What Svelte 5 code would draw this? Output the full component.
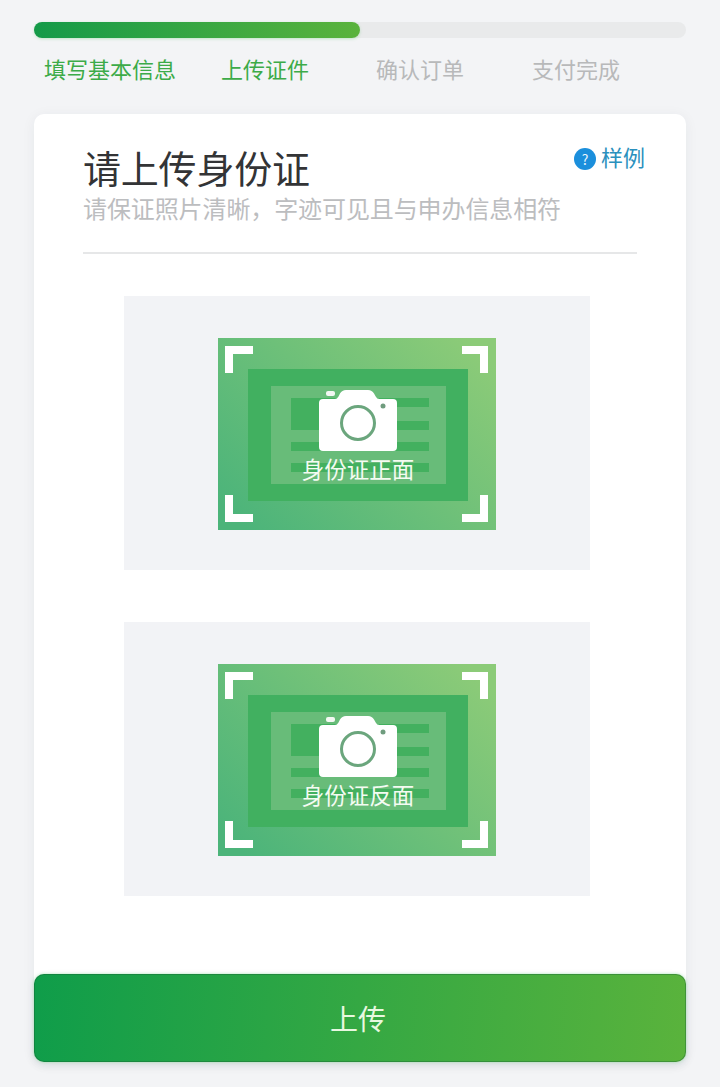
<script lang="ts">
  const steps = [
    { label: '填写基本信息', done: true },
    { label: '上传证件', done: true },
    { label: '确认订单', done: false },
    { label: '支付完成', done: false }
  ];

  const sides = [
    { id: 'front', label: '身份证正面' },
    { id: 'back', label: '身份证反面' }
  ];

  // Corner brackets of the scan frame
  const corners = [
    'M11 35V12H35',
    'M244 12H266V35',
    'M11 157V180H35',
    'M244 180H266V157'
  ];
</script>

<main class="page">
  <div class="progress"><div class="progress-fill"></div></div>

  <ol class="steps">
    {#each steps as step}
      <li class:done={step.done}>{step.label}</li>
    {/each}
  </ol>

  <section class="card">
    <div class="content">
      <header class="head">
        <div>
          <h1>请上传身份证</h1>
          <p>请保证照片清晰，字迹可见且与申办信息相符</p>
        </div>
        <a class="sample" href="#sample">
          <span class="help">?</span>
          样例
        </a>
      </header>

      <div class="uploads">
        {#each sides as side}
          <div class="upload">
            <svg class="id-art" viewBox="0 0 278 192" width="278" height="192" role="img" aria-label={side.label}>
              <defs>
                <linearGradient id={`bg-${side.id}`} x1="0" y1="0.85" x2="1" y2="0.15">
                  <stop offset="0" stop-color="#4cb47a" />
                  <stop offset="1" stop-color="#8ccb78" />
                </linearGradient>
              </defs>
              <rect width="278" height="192" fill={`url(#bg-${side.id})`} />
              <rect x="30" y="31" width="220" height="132" fill="#41b060" />
              <rect x="53" y="48" width="175" height="98" fill="#68bc79" />
              <g fill="#43b05f">
                <rect x="73" y="60" width="138" height="9" />
                <rect x="73" y="69" width="30" height="23" />
                <rect x="73" y="83" width="138" height="9" />
                <rect x="73" y="104" width="138" height="9" />
                <rect x="73" y="125" width="138" height="9" />
              </g>
              {#each corners as d}
                <path {d} fill="none" stroke="#fff" stroke-width="8" />
              {/each}
              <rect x="108" y="53" width="9" height="5" rx="2" fill="#f3f8f3" />
              <path
                d="M105 61H117Q119 61 120.500 58.500L122 55.500Q124 52 128 52H150Q154 52 156 55.500L158 59Q159 61 161.500 61H175Q179 61 179 65V109Q179 113 175 113H105Q101 113 101 109V65Q101 61 105 61Z"
                fill="#fff"
              />
              <circle cx="140" cy="85" r="16.500" fill="#fff" stroke="#6ba67d" stroke-width="3" />
              <circle cx="165" cy="68" r="2.500" fill="#6f9c7e" />
              <text x="140" y="139.500" text-anchor="middle">{side.label}</text>
            </svg>
          </div>
        {/each}
      </div>
    </div>

    <button class="submit" type="button">上传</button>
  </section>
</main>

<style>
  :global(body) {
    background: #f3f4f6;
  }

  .page {
    box-sizing: border-box;
    height: 1087px;
    padding: 22px 34px 0;
    font-family: 'Noto Sans CJK SC', 'Noto Sans', sans-serif;
    overflow: hidden;
  }

  .progress {
    height: 16px;
    border-radius: 8px;
    background: #e9eaeb;
  }

  .progress-fill {
    width: 326px;
    height: 100%;
    border-radius: 8px;
    background: linear-gradient(90deg, #149a48, #5ab33c);
    box-shadow: 0 1px 3px rgba(100, 200, 110, 0.35);
  }

  .steps {
    display: grid;
    grid-template-columns: 177px 155px 156px auto;
    margin: 0;
    padding: 14px 0 0 10px;
    list-style: none;
    font-size: 22px;
    line-height: 32px;
    color: #b8b9ba;
  }

  .steps li.done {
    color: #3cab48;
  }

  .card {
    display: flex;
    flex-direction: column;
    margin-top: 30px;
    height: 948px;
    border-radius: 10px;
    background: #fff;
    box-shadow: 0 2px 14px rgba(40, 50, 70, 0.06);
  }

  .content {
    flex: 1;
    padding: 28px 49px 0;
  }

  .head {
    display: flex;
    justify-content: space-between;
    align-items: flex-start;
    height: 110px;
    border-bottom: 2px solid #e6e7e8;
  }

  h1 {
    margin: 0;
    font-size: 38px;
    font-weight: 400;
    letter-spacing: -0.2px;
    line-height: 50px;
    color: #333436;
  }

  .head p {
    margin: 0;
    font-size: 24px;
    letter-spacing: -0.1px;
    line-height: 32px;
    color: #bcbdbf;
  }

  .sample {
    display: flex;
    align-items: center;
    gap: 5px;
    margin: -2px -8px 0 0;
    font-size: 22px;
    line-height: 32px;
    color: #2b90bd;
    text-decoration: none;
  }

  .help {
    display: grid;
    place-items: center;
    width: 22px;
    height: 22px;
    margin-top: 6px;
    border-radius: 50%;
    background: #1b8fdc;
    color: #e8f4fc;
    font-size: 14px;
    font-weight: 400;
    line-height: 1;
  }

  .uploads {
    display: flex;
    flex-direction: column;
    gap: 52px;
    padding: 42px 0 0 41px;
  }

  .upload {
    box-sizing: border-box;
    display: flex;
    align-items: center;
    justify-content: center;
    width: 466px;
    height: 274px;
    padding-top: 2px;
    background: #f2f3f6;
  }

  .id-art {
    display: block;
  }

  .id-art text {
    fill: #f4fbf2;
    font-size: 22.500px;
  }

  .submit {
    flex: none;
    height: 88px;
    padding: 0 4px 0 0;
    border: 0;
    border-radius: 10px;
    background: linear-gradient(95deg, #0f9d4a, #5ab33c);
    box-shadow:
      inset 0 0 0 1px rgba(20, 90, 50, 0.35),
      0 0 3px rgba(120, 225, 140, 0.6),
      0 3px 9px rgba(40, 60, 80, 0.1);
    color: #e8f8e0;
    font-family: inherit;
    font-size: 28px;
  }
</style>
